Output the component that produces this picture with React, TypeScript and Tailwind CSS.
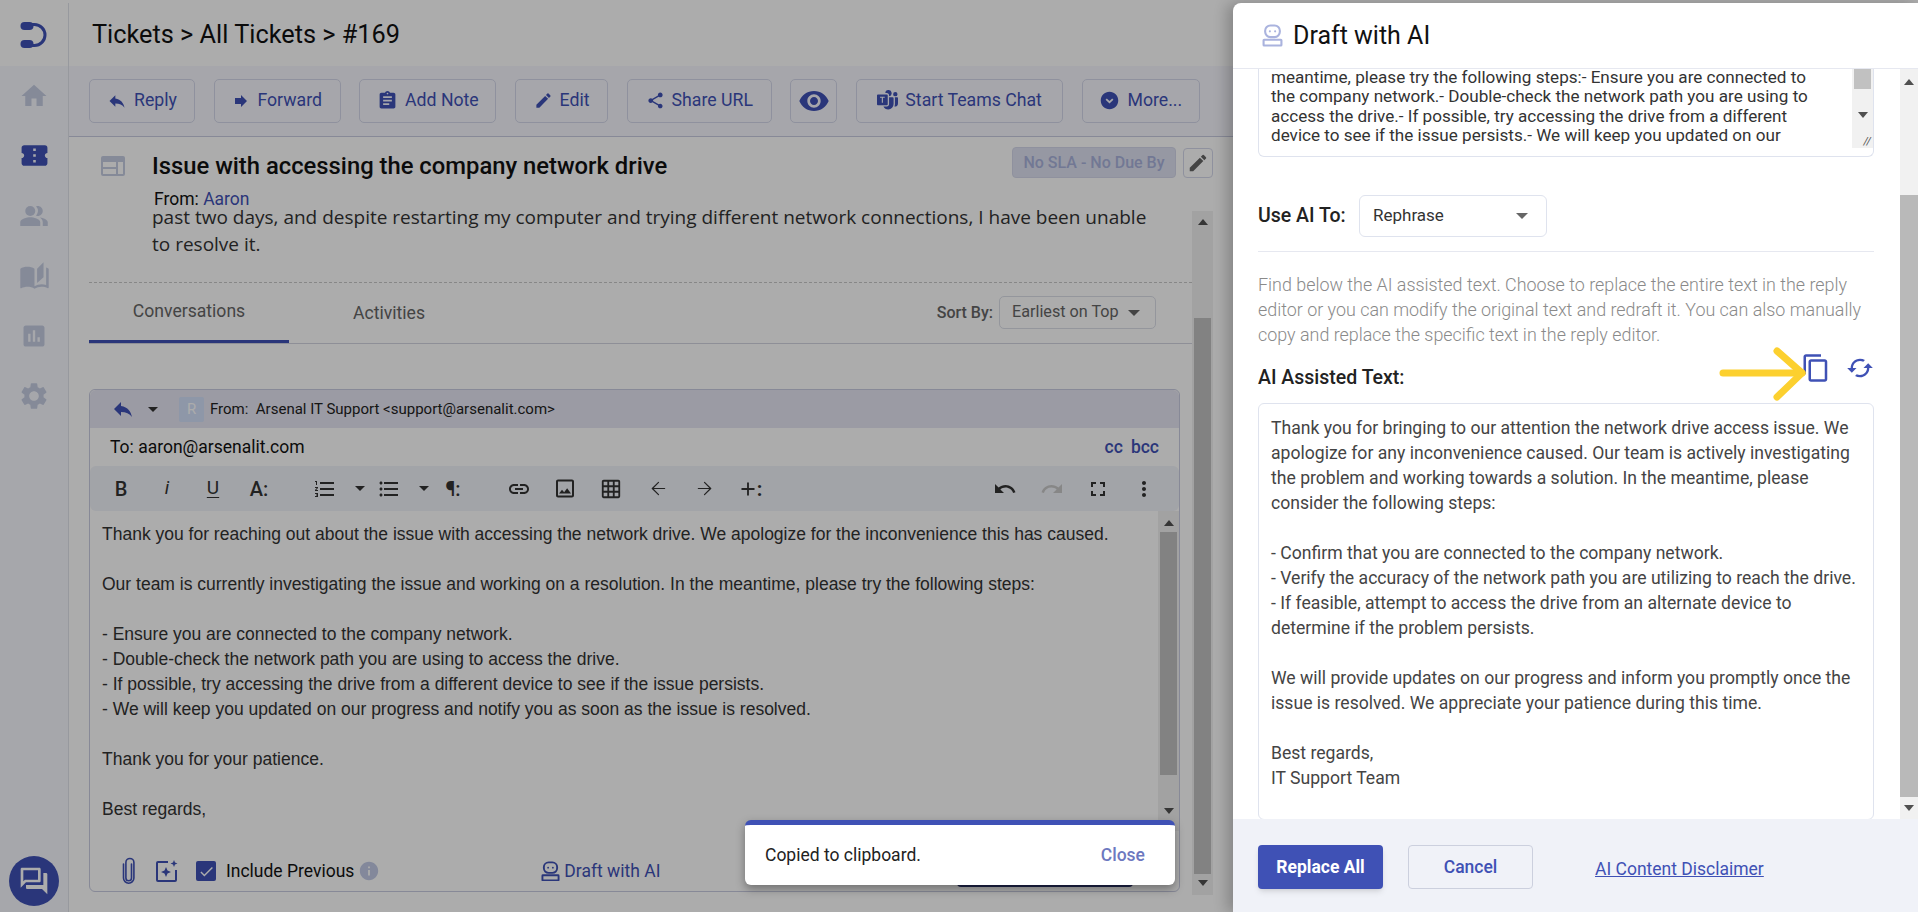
import type { ReactNode } from "react";
import { ArrowLeft, ArrowRight, Plus } from "lucide-react";
import { BsMicrosoftTeams } from "react-icons/bs";
import {
  MdAssessment,
  MdAssignment,
  MdAutoStories,
  MdCached,
  MdCheck,
  MdConfirmationNumber,
  MdEdit,
  MdExpandCircleDown,
  MdFormatListBulleted,
  MdFormatListNumbered,
  MdForward,
  MdFullscreen,
  MdGridOn,
  MdHome,
  MdInfo,
  MdLink,
  MdMoreVert,
  MdOutlineContentCopy,
  MdOutlineImage,
  MdOutlineQuestionAnswer,
  MdPeopleAlt,
  MdRedo,
  MdReply,
  MdSettings,
  MdShare,
  MdUndo,
  MdVisibility,
} from "react-icons/md";

const blue = "#3f51b5";

function Logo() {
  return (
    <svg width="28" height="26" viewBox="0 0 28 26" fill="none">
      <path d="M8 2.5h6.5a10.5 10.5 0 0 1 0 21H8" stroke={blue} strokeWidth="3" />
      <rect x="0.5" y="0" width="13" height="8" rx="4" fill={blue} />
      <rect x="0.5" y="18" width="13" height="8" rx="4" fill={blue} />
    </svg>
  );
}

function Robot({ size = 20, color = blue }: { size?: number; color?: string }) {
  return (
    <svg width={size} height={size * 1.1} viewBox="0 0 20 22" fill="none" stroke={color} strokeWidth="2">
      <rect x="3" y="1.5" width="14" height="11" rx="5" />
      <circle cx="7.5" cy="7" r="1" fill={color} stroke="none" />
      <circle cx="12.5" cy="7" r="1" fill={color} stroke="none" />
      <rect x="1.5" y="15" width="17" height="5.5" rx="0.5" />
    </svg>
  );
}

function PanelIcon() {
  return (
    <svg width="24" height="20" viewBox="0 0 24 20" fill="#c6cde2">
      <path d="M2 0h20a2 2 0 0 1 2 2v16a2 2 0 0 1-2 2H2a2 2 0 0 1-2-2V2a2 2 0 0 1 2-2zm0 6v5h13V6H2zm15 0v12h5V6h-5zM2 13v5h13v-5H2z" fillRule="evenodd" />
    </svg>
  );
}

function Paperclip() {
  return (
    <svg width="16" height="28" viewBox="0 0 16 28" fill="none" stroke={blue} strokeWidth="1.6" strokeLinecap="round">
      <path d="M10.5 7v14a2.8 2.8 0 0 1-5.6 0V5.5a4 4 0 0 1 8 0V21a5.2 5.2 0 0 1-10.4 0V7" />
    </svg>
  );
}

function ImageSpark() {
  return (
    <svg width="24" height="23" viewBox="0 0 24 23" fill="none" stroke={blue} strokeWidth="2">
      <path d="M13 2H3a1 1 0 0 0-1 1v17a1 1 0 0 0 1 1h17a1 1 0 0 0 1-1V10" />
      <path d="M11 7l1.5 3.5L16 12l-3.5 1.5L11 17l-1.5-3.5L6 12l3.5-1.5z" fill={blue} stroke="none" />
      <path d="M19 0l1 2.5 2.5 1-2.5 1-1 2.5-1-2.5-2.5-1 2.5-1z" fill={blue} stroke="none" />
    </svg>
  );
}

function ActionButton({ className, children }: { className: string; children: ReactNode }) {
  return (
    <button className={`flex h-[44px] shrink-0 items-center justify-center gap-[7px] rounded-[5px] border border-[#d5d8ea] text-[17.7px] text-[#3f51b5] ${className}`}>
      {children}
    </button>
  );
}

function ArrowUp() {
  return <span className="block h-0 w-0 border-x-[5px] border-b-[6px] border-x-transparent border-b-[#505050]" />;
}

function ArrowDown() {
  return <span className="block h-0 w-0 border-x-[5px] border-t-[6px] border-x-transparent border-t-[#505050]" />;
}

function Caret() {
  return <span className="block h-0 w-0 border-x-[5px] border-t-[5px] border-x-transparent border-t-[#333]" />;
}

function ToolIcon({ className = "", children }: { className?: string; children: ReactNode }) {
  return <span className={`flex h-6 w-6 shrink-0 items-center justify-center text-[#333] ${className}`}>{children}</span>;
}

const textareaLines = [
  "meantime, please try the following steps:- Ensure you are connected to",
  "the company network.- Double-check the network path you are using to",
  "access the drive.- If possible, try accessing the drive from a different",
  "device to see if the issue persists.- We will keep you updated on our",
];

const aiText = [
  "Thank you for bringing to our attention the network drive access issue. We",
  "apologize for any inconvenience caused. Our team is actively investigating",
  "the problem and working towards a solution. In the meantime, please",
  "consider the following steps:",
  "",
  "- Confirm that you are connected to the company network.",
  "- Verify the accuracy of the network path you are utilizing to reach the drive.",
  "- If feasible, attempt to access the drive from an alternate device to",
  "determine if the problem persists.",
  "",
  "We will provide updates on our progress and inform you promptly once the",
  "issue is resolved. We appreciate your patience during this time.",
  "",
  "Best regards,",
  "IT Support Team",
];

const editorLines = [
  "Thank you for reaching out about the issue with accessing the network drive. We apologize for the inconvenience this has caused.",
  "",
  "Our team is currently investigating the issue and working on a resolution. In the meantime, please try the following steps:",
  "",
  "- Ensure you are connected to the company network.",
  "- Double-check the network path you are using to access the drive.",
  "- If possible, try accessing the drive from a different device to see if the issue persists.",
  "- We will keep you updated on our progress and notify you as soon as the issue is resolved.",
  "",
  "Thank you for your patience.",
  "",
  "Best regards,",
];

function Compose() {
  return (
    <section className="h-[503px] w-[1091px] rounded-[6px] border border-[#c8cbe0]">
      <div className="flex h-[38px] items-center rounded-t-[6px] bg-[#e6e6f3] pl-[23px] text-[15px] text-[#222]">
        <MdReply size={24} color={blue} className="-ml-[2px]" />
        <span className="ml-[13px]"><Caret /></span>
        <span className="ml-[21px] flex h-[25px] w-[25px] items-center justify-center rounded-[2px] bg-[#d3e0fa] text-[15px] text-white">R</span>
        <span className="ml-[6px] whitespace-pre">From:  Arsenal IT Support &lt;support@arsenalit.com&gt;</span>
      </div>
      <div className="flex h-[38px] items-center justify-between pr-[20px] pl-[20px] text-[17.5px]">
        <span>To: aaron@arsenalit.com</span>
        <span className="flex gap-[8px] font-medium text-[#3f51b5]">
          <span>cc</span>
          <span>bcc</span>
        </span>
      </div>
      <div className="flex h-[45px] items-center rounded-[6px] bg-[#f1f3f9] pr-[23px] pl-[19px]">
        <ToolIcon className="text-[20px] font-medium">B</ToolIcon>
        <ToolIcon className="ml-[22px] text-[19px] italic">i</ToolIcon>
        <ToolIcon className="ml-[22px] text-[19px] underline underline-offset-[3px]">U</ToolIcon>
        <ToolIcon className="ml-[22px] text-[20px] font-medium">A:</ToolIcon>
        <ToolIcon className="ml-[42px]"><MdFormatListNumbered size={24} /></ToolIcon>
        <span className="ml-[18px]"><Caret /></span>
        <ToolIcon className="ml-[12px]"><MdFormatListBulleted size={24} /></ToolIcon>
        <span className="ml-[18px]"><Caret /></span>
        <ToolIcon className="ml-[12px] text-[20px] font-medium">¶:</ToolIcon>
        <ToolIcon className="ml-[42px]"><MdLink size={26} /></ToolIcon>
        <ToolIcon className="ml-[22px]"><MdOutlineImage size={25} /></ToolIcon>
        <ToolIcon className="ml-[22px]"><MdGridOn size={22} /></ToolIcon>
        <ToolIcon className="ml-[23px]"><ArrowLeft size={21} strokeWidth={1.4} /></ToolIcon>
        <ToolIcon className="ml-[22px]"><ArrowRight size={21} strokeWidth={1.4} /></ToolIcon>
        <ToolIcon className="ml-[22px] text-[20px] font-bold">
          <Plus size={20} strokeWidth={2.2} className="shrink-0" />
          <span className="-ml-[1px]">:</span>
        </ToolIcon>
        <ToolIcon className="ml-auto"><MdUndo size={24} /></ToolIcon>
        <ToolIcon className="ml-[23px] !text-[#c8c8c8]"><MdRedo size={24} /></ToolIcon>
        <ToolIcon className="ml-[22px]"><MdFullscreen size={26} /></ToolIcon>
        <ToolIcon className="ml-[22px]"><MdMoreVert size={24} /></ToolIcon>
      </div>
      <div className="flex h-[320px]">
        <div className="min-w-0 flex-1 pt-[11px] pl-[12px] font-['Liberation_Sans',sans-serif] text-[17.5px] leading-[25px] text-[#333]">
          {editorLines.map((line, i) => (
            <p key={i} className="h-[25px] whitespace-nowrap">{line}</p>
          ))}
        </div>
        <div className="flex w-[21px] flex-col items-center bg-[#f1f1f1] pt-[9px]">
          <ArrowUp />
          <div className="mt-[6px] h-[243px] w-[17px] bg-[#c1c1c1]" />
          <div className="mt-[33px]"><ArrowDown /></div>
        </div>
      </div>
      <div className="mt-[25px] flex h-[30px] items-center pl-[31px] text-[17.5px]">
        <Paperclip />
        <span className="ml-[18px]"><ImageSpark /></span>
        <span className="ml-[17px] flex h-[20px] w-[20px] items-center justify-center rounded-[2px] bg-[#3f51b5] text-white">
          <MdCheck size={17} />
        </span>
        <span className="ml-[10px]">Include Previous</span>
        <MdInfo size={22} color="#c2cae6" className="ml-[4px]" />
        <span className="ml-[161px] flex items-center gap-[4px] text-[#3f51b5]">
          <Robot size={19} />
          Draft with AI
        </span>
        <button className="ml-[297px] h-[31px] w-[176px] rounded-[4px] bg-[#2b3268]" />
      </div>
    </section>
  );
}

function DraftPanel() {
  return (
    <aside className="absolute top-[3px] right-0 bottom-0 z-20 flex w-[685px] flex-col rounded-tl-[8px] bg-white shadow-[-6px_0_14px_rgba(0,0,0,0.22)]">
      <header className="flex h-[66px] shrink-0 items-center gap-[10px] border-b border-[#e6e8f0] pt-[1px] pl-[29px] text-[25px] text-[#111]">
        <Robot size={21} color="#aab3de" />
        Draft with AI
      </header>

      <div className="flex h-[750px] shrink-0">
        <div className="w-[667px] pr-[26px] pl-[25px]">
          <div className="flex h-[88px] rounded-b-[6px] border-x border-b border-[#dfe3ee] pb-[8px]">
            <div className="min-w-0 flex-1 pl-[12px] text-[17.1px] leading-[19.6px] text-[#333]">
              {textareaLines.map((line) => (
                <p key={line} className="whitespace-nowrap first:mb-[2.2px] first:leading-[16px]">{line}</p>
              ))}
            </div>
            <div className="flex w-[21px] shrink-0 flex-col items-center bg-[#f1f1f1]">
              <div className="h-[20px] w-[17px] bg-[#c1c1c1]" />
              <div className="mt-[23px]"><ArrowDown /></div>
              <div className="mt-[9px] flex flex-1 items-end justify-end self-stretch pr-[2px] pb-[1px] text-[11px] leading-none text-[#555] italic">//</div>
            </div>
          </div>

          <div className="mt-[38px] flex items-center">
            <label className="w-[101px] text-[19.5px] font-medium text-[#222]">Use AI To:</label>
            <div className="flex h-[42px] w-[188px] items-center justify-between rounded-[6px] border border-[#dfe3ee] pr-[18px] pl-[13px] text-[17px] text-[#333]">
              Rephrase
              <span className="block h-0 w-0 border-x-[6px] border-t-[6px] border-x-transparent border-t-[#666]" />
            </div>
          </div>
          <div className="mt-[14px] border-t border-[#e6e8f0]" />

          <p className="mt-[20px] text-[17.9px] leading-[25px] font-light text-[#8a8a8a]">
            Find below the AI assisted text. Choose to replace the entire text in the reply editor or you can modify the original text and redraft it. You can also manually copy and replace the specific text in the reply editor.
          </p>

          <div className="mt-[6px] flex h-[50px] items-start justify-between">
            <span className="mt-[10px] text-[19.5px] font-medium text-[#222]">AI Assisted Text:</span>
            <div className="flex items-center text-[#3f51b5]">
              <MdOutlineContentCopy size={30} />
              <MdCached size={28} className="ml-[15px]" />
            </div>
          </div>

          <div className="h-[417px] overflow-hidden rounded-[6px] border border-[#dfe3ee] pt-[12px] pl-[12px] text-[17.6px] leading-[25px] text-[#444]">
            {aiText.map((line, i) => (
              <p key={i} className="h-[25px] whitespace-nowrap">{line}</p>
            ))}
          </div>
        </div>

        <div className="flex w-[18px] flex-col items-center bg-[#f1f1f1] pt-[10px]">
          <ArrowUp />
          <div className="mt-[110px] h-[602px] w-full bg-[#b9b9b9]" />
          <div className="mt-[8px]"><ArrowDown /></div>
        </div>
      </div>

      <footer className="flex flex-1 items-start bg-[#f0f2f8] pt-[26px] pl-[25px] text-[17.5px]">
        <button className="h-[44px] w-[125px] rounded-[4px] bg-[#3f51b5] font-bold text-white shadow-md">Replace All</button>
        <button className="ml-[25px] h-[44px] w-[125px] rounded-[4px] border border-[#ccd0de] font-medium text-[#3f51b5]">Cancel</button>
        <a className="mt-[11px] ml-[62px] text-[#3f51b5] underline">AI Content Disclaimer</a>
      </footer>

      {/* hand drawn annotation from the screenshot */}
      <svg className="absolute top-[344px] left-[486px]" width="90" height="54" viewBox="0 0 90 54" fill="none" stroke="#fcd02f" strokeWidth="7" strokeLinecap="round" strokeLinejoin="round">
        <path d="M4 26h79" />
        <path d="M58 4l25 22-25 24" />
      </svg>
    </aside>
  );
}

export default function App() {
  return (
    <div className="relative h-screen overflow-hidden bg-white font-['Roboto',sans-serif] text-[#111]">
      <div className="h-[3px] bg-white" />
      <div className="flex h-[909px]">
        <aside className="relative w-[69px] shrink-0 border-r border-[#e0e3ea] bg-[#f6f8fe]">
          <div className="flex h-[63px] items-center justify-center bg-white">
            <Logo />
          </div>
          <div className="flex flex-col items-center text-[#c6cde2]">
            <MdHome size={30} className="mt-[15px]" />
            <MdConfirmationNumber size={31} color={blue} className="mt-[29px]" />
            <MdPeopleAlt size={30} className="mt-[30px]" />
            <MdAutoStories size={31} className="mt-[30px]" />
            <MdAssessment size={28} className="mt-[30px]" />
            <MdSettings size={32} className="mt-[30px]" />
          </div>
          <div className="absolute bottom-[6px] left-[9px] flex h-[50px] w-[50px] items-center justify-center rounded-full bg-[#3f51b5] text-white">
            <MdOutlineQuestionAnswer size={32} />
          </div>
        </aside>

        <main className="min-w-0 flex-1">
          <div className="flex h-[63px] items-center pl-[23px] text-[25.3px]">
            Tickets &gt; All Tickets &gt; #169
          </div>

          <div className="flex h-[71px] items-center gap-[18.7px] border-b border-[#c8cbe0] bg-[#f6f7fe] pb-[1px] pl-[20px]">
            <ActionButton className="w-[106px]"><MdReply size={20} />Reply</ActionButton>
            <ActionButton className="w-[127px]"><MdForward size={18} />Forward</ActionButton>
            <ActionButton className="w-[137px]"><MdAssignment size={21} />Add Note</ActionButton>
            <ActionButton className="w-[93px]"><MdEdit size={19} />Edit</ActionButton>
            <ActionButton className="w-[145px]"><MdShare size={19} />Share URL</ActionButton>
            <ActionButton className="w-[47px]"><MdVisibility size={32} /></ActionButton>
            <ActionButton className="w-[207px]"><BsMicrosoftTeams size={21} />Start Teams Chat</ActionButton>
            <ActionButton className="w-[118px]"><MdExpandCircleDown size={21} />More...</ActionButton>
          </div>

          {/* ticket head */}
          <div className="flex h-[67px] w-[1144px]">
            <div className="mt-[19px] ml-[32px] w-[51px] shrink-0"><PanelIcon /></div>
            <div className="min-w-0 flex-1">
              <h1 className="mt-[14px] text-[23.8px] leading-[30px] font-medium">Issue with accessing the company network drive</h1>
              <p className="mt-[7px] ml-[2px] text-[17.5px] leading-[22px]">
                From: <span className="text-[#3f51b5]">Aaron</span>
              </p>
            </div>
            <div className="mt-[10px] flex h-[31px] w-[164px] shrink-0 items-center justify-center rounded-[4px] border border-[#d5d8ea] bg-[#dfe2f2] text-[16px] font-medium text-[#aab2dc]">
              No SLA - No Due By
            </div>
            <div className="mt-[11px] ml-[7px] flex h-[30px] w-[30px] shrink-0 items-center justify-center rounded-[4px] border border-[#d5d8ea] text-[#666]">
              <MdEdit size={22} />
            </div>
          </div>

          <div className="flex w-[1144px]">
            <div className="w-[1123px] shrink-0 pl-[20px]">
              <p className="w-[1063px] pl-[63px] font-['Open_Sans',sans-serif] text-[19px] leading-[26.5px] text-[#333]">
                past two days, and despite restarting my computer and trying different network connections, I have been unable to resolve it.
              </p>
              <div className="mt-[25px] border-t border-dashed border-[#c9c9c9]" />

              <div className="flex h-[61px] items-start justify-between border-b border-[#d3d5e0]">
                <div className="flex">
                  <div className="flex h-[60px] w-[200px] items-center justify-center border-b-[3px] border-[#3f51b5] text-[17.6px] text-[#666]">Conversations</div>
                  <div className="flex h-[60px] w-[200px] items-center justify-center text-[17.6px] text-[#666]">Activities</div>
                </div>
                <div className="mt-[13px] mr-[36px] flex items-center gap-[6px]">
                  <span className="text-[16px] font-medium text-[#666]">Sort By:</span>
                  <div className="flex h-[33px] w-[157px] items-center justify-between rounded-[5px] border border-[#dcdfe8] pr-[15px] pl-[12px] text-[16.2px] text-[#666]">
                    Earliest on Top
                    <span className="block h-0 w-0 border-x-[6px] border-t-[6px] border-x-transparent border-t-[#666]" />
                  </div>
                </div>
              </div>

              <div className="mt-[45px]">
                <Compose />
              </div>
            </div>

            <div className="mt-[7px] flex h-[684px] w-[21px] shrink-0 flex-col items-center bg-[#f1f1f1] pt-[8px]">
              <ArrowUp />
              <div className="mt-[93px] h-[556px] w-[17px] bg-[#c1c1c1]" />
              <div className="mt-[6px]"><ArrowDown /></div>
            </div>
          </div>
        </main>
      </div>

      <div className="absolute inset-0 z-10 bg-black/[0.325]" />

      <div className="absolute top-[820px] left-[745px] z-30 flex h-[65px] w-[430px] items-center justify-between rounded-[6px] border-t-[5px] border-[#3f51b5] bg-white pr-[30px] pl-[20px] text-[17.5px] shadow-[0_4px_10px_rgba(0,0,0,0.35)]">
        <span className="text-[#222]">Copied to clipboard.</span>
        <span className="font-medium text-[#6d78c0]">Close</span>
      </div>

      <DraftPanel />
    </div>
  );
}
